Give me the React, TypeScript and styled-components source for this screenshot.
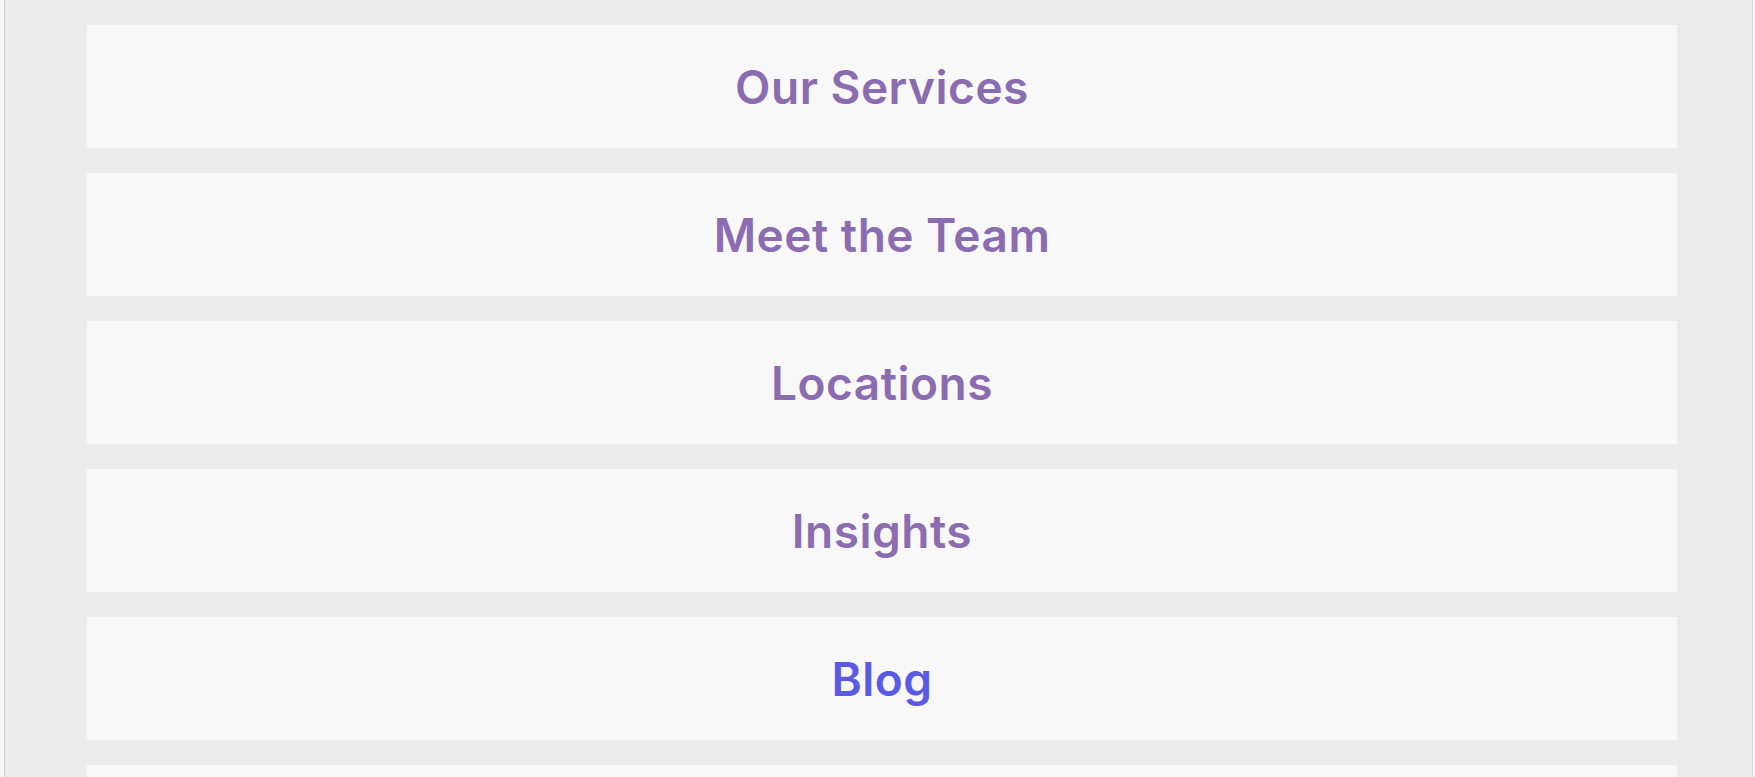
import React from 'react';
import styled, { createGlobalStyle } from 'styled-components';

const GlobalStyle = createGlobalStyle`
  html, body {
    margin: 0;
    padding: 0;
    height: 100%;
    overflow: hidden;
    background: #f6f6f6;
  }
`;

const Panel = styled.nav`
  box-sizing: border-box;
  height: 777px;
  margin: 0 2px 0 4px;
  padding: 0 75px 0 82px;
  border-left: 1px solid #cfcfcf;
  border-right: 1px solid #d8d8d8;
  background: #ececec;
  overflow: hidden;
`;

const MenuList = styled.ul`
  display: flex;
  flex-direction: column;
  gap: 24.8px;
  margin: -123px 0 0;
  padding: 0;
  list-style: none;
`;

const MenuItem = styled.li`
  display: flex;
  align-items: center;
  justify-content: center;
  flex: 0 0 123.2px;
  background: #f8f8f8;
`;

const MenuLink = styled.a<{ $active?: boolean }>`
  color: ${({ $active }) => ($active ? '#5a5ae4' : '#8b6cb0')};
  font-family: Inter, 'Noto Sans', sans-serif;
  font-size: 46px;
  font-weight: 600;
  text-decoration: none;
  letter-spacing: 0.5px;
`;

// the first and last entries only peek in at the edges, their labels are out of view
const items = [
  { label: '' },
  { label: 'Our Services' },
  { label: 'Meet the Team' },
  { label: 'Locations' },
  { label: 'Insights' },
  { label: 'Blog', active: true },
  { label: '' },
];

const App: React.FC = () => (
  <>
    <GlobalStyle />
    <Panel>
      <MenuList>
        {items.map((item, index) => (
          <MenuItem key={`${item.label}-${index}`}>
            {item.label ? (
              <MenuLink href="#" $active={item.active}>
                {item.label}
              </MenuLink>
            ) : null}
          </MenuItem>
        ))}
      </MenuList>
    </Panel>
  </>
);

export default App;
